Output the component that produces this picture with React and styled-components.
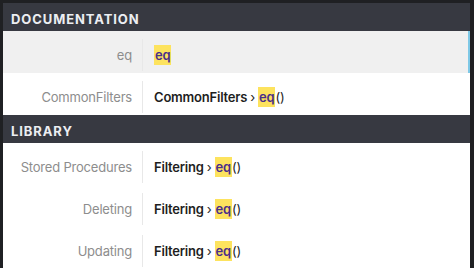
import React from 'react';
import styled, { createGlobalStyle } from 'styled-components';

const GlobalStyle = createGlobalStyle`
  html, body {
    margin: 0;
    padding: 0;
    background: #1f2023;
    overflow: hidden;
  }
  body {
    font-family: Inter, "Noto Sans", sans-serif;
  }
`;

const Frame = styled.div`
  width: 474px;
  height: 268px;
  box-sizing: border-box;
  padding: 3px 4px 0 3px;
  background: #1f2023;
`;

const Panel = styled.div`
  display: flex;
  flex-direction: column;
  height: 100%;
  background: #ffffff;
  overflow: hidden;
`;

const SectionHeader = styled.div`
  height: 28px;
  flex-shrink: 0;
  box-sizing: border-box;
  display: flex;
  align-items: center;
  padding: 3px 0 0 8px;
  background: #373941;
  color: #eceef2;
  font-size: 13px;
  font-weight: 700;
  letter-spacing: 0.9px;
`;

const Row = styled.div`
  height: 42px;
  flex-shrink: 0;
  box-sizing: border-box;
  padding: 8px 0 2px;
  display: grid;
  grid-template-columns: 140px 1fr;
  align-items: stretch;
  background: ${p => (p.$active ? '#f0f0f0' : '#ffffff')};
  box-shadow: ${p => (p.$active ? 'inset -2px 0 0 #7ec8e6' : 'none')};
`;

const Label = styled.div`
  display: flex;
  align-items: center;
  justify-content: flex-end;
  padding-right: 10px;
  color: #8d8d8d;
  font-size: 13px;
  letter-spacing: -0.2px;
  border-right: 1px solid #e8e8e8;
`;

const Title = styled.div`
  display: flex;
  align-items: center;
  padding-left: 11px;
  color: #1e1e1e;
  font-size: 13px;
  font-weight: 600;
  letter-spacing: -0.2px;
`;

const Sep = styled.span`
  font-weight: 400;
  margin: 0 3px 0 3px;
`;

const Match = styled.span`
  background: #fde35e;
  color: #4a2f8a;
  font-weight: 600;
  padding: 2px 1px;
`;

const Parens = styled.span`
  font-weight: 400;
`;

const rows = [
  { section: 'DOCUMENTATION' },
  { label: 'eq', active: true, path: [], call: false },
  { label: 'CommonFilters', path: ['CommonFilters'], call: true },
  { section: 'LIBRARY' },
  { label: 'Stored Procedures', path: ['Filtering'], call: true },
  { label: 'Deleting', path: ['Filtering'], call: true },
  { label: 'Updating', path: ['Filtering'], call: true },
];

export default function App() {
  return (
    <>
      <GlobalStyle />
      <Frame>
        <Panel>
          {rows.map((r, i) =>
            r.section ? (
              <SectionHeader key={i}>{r.section}</SectionHeader>
            ) : (
              <Row key={i} $active={r.active}>
                <Label>{r.label}</Label>
                <Title>
                  {r.path.map(p => (
                    <React.Fragment key={p}>
                      {p}
                      <Sep>›</Sep>
                    </React.Fragment>
                  ))}
                  <Match>eq</Match>
                  {r.call && <Parens>()</Parens>}
                </Title>
              </Row>
            )
          )}
        </Panel>
      </Frame>
    </>
  );
}
